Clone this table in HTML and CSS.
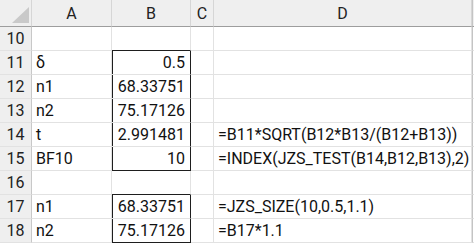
FILE: index.html
```html
<!DOCTYPE html>
<html lang="en">
<head>
    <meta charset="UTF-8">
    <title>JZS sample size</title>
    <link rel="stylesheet" href="styles.css">
</head>
<body>
    <table class="sheet">
        <colgroup>
            <col class="c-head">
            <col class="c-a">
            <col class="c-b">
            <col class="c-c">
            <col class="c-d">
            <col class="c-e">
        </colgroup>
        <thead>
            <tr>
                <th class="corner">
                    <svg width="32" height="26" viewBox="0 0 32 26"><polygon points="29,7 29,23 12,23" fill="#c9c9c9"/></svg>
                </th>
                <th>A</th>
                <th>B</th>
                <th>C</th>
                <th>D</th>
                <th class="edge"></th>
            </tr>
        </thead>
        <tbody>
            <tr>
                <th>10</th>
                <td></td>
                <td class="box-top"></td>
                <td></td>
                <td></td>
                <td class="edge"></td>
            </tr>
            <tr>
                <th>11</th>
                <td>&delta;</td>
                <td class="num box-side">0.5</td>
                <td></td>
                <td></td>
                <td class="edge"></td>
            </tr>
            <tr>
                <th>12</th>
                <td>n1</td>
                <td class="num box-side">68.33751</td>
                <td></td>
                <td></td>
                <td class="edge"></td>
            </tr>
            <tr>
                <th>13</th>
                <td>n2</td>
                <td class="num box-side">75.17126</td>
                <td></td>
                <td></td>
                <td class="edge"></td>
            </tr>
            <tr>
                <th>14</th>
                <td>t</td>
                <td class="num box-side">2.991481</td>
                <td></td>
                <td>=B11*SQRT(B12*B13/(B12+B13))</td>
                <td class="edge"></td>
            </tr>
            <tr>
                <th>15</th>
                <td>BF10</td>
                <td class="num box-side box-bottom">10</td>
                <td></td>
                <td>=INDEX(JZS_TEST(B14,B12,B13),2)</td>
                <td class="edge"></td>
            </tr>
            <tr>
                <th>16</th>
                <td></td>
                <td class="box-top"></td>
                <td></td>
                <td></td>
                <td class="edge"></td>
            </tr>
            <tr>
                <th>17</th>
                <td>n1</td>
                <td class="num box-side">68.33751</td>
                <td></td>
                <td>=JZS_SIZE(10,0.5,1.1)</td>
                <td class="edge"></td>
            </tr>
            <tr>
                <th>18</th>
                <td>n2</td>
                <td class="num box-side box-bottom">75.17126</td>
                <td></td>
                <td>=B17*1.1</td>
                <td class="edge"></td>
            </tr>
        </tbody>
    </table>
</body>
</html>
```

FILE: styles.css
```css
body {
    margin: 0;
    background-color: #ffffff;
    font-family: Roboto, "Liberation Sans", Arial, sans-serif;
    font-size: 16px;
    color: #111;
}
.sheet {
    width: 474px;
    table-layout: fixed;
    border-collapse: separate;
    border-spacing: 0;
}
.c-head { width: 32px; }
.c-a { width: 80px; }
.c-b { width: 79px; }
.c-c { width: 23px; }
.c-d { width: 258px; }
.c-e { width: 2px; }

th, td {
    padding: 1px 4px 0;
    height: 22px;
    line-height: 22px;
    white-space: nowrap;
    overflow: visible;
    border-right: 1px solid #e2e2e2;
    border-bottom: 1px solid #e2e2e2;
}
thead th {
    height: 23px;
    padding-top: 2px;
    line-height: 24px;
    background-color: #efefef;
    font-weight: normal;
    color: #222;
    text-align: center;
    border-right: 1px solid #d6d6d6;
    border-bottom: 1px solid #9d9d9d;
}
thead .corner {
    padding: 0;
    height: 25px;
    line-height: 0;
    vertical-align: top;
}
tbody th {
    padding-left: 0;
    padding-right: 0;
    font-weight: normal;
    text-align: center;
    color: #222;
    background-color: #efefef;
    border-right: 1px solid #c8c8c8;
}
.edge {
    padding: 0;
    border-right: none;
    border-left: 1px solid #c4c4c4;
}
thead .edge {
    padding: 0;
    border-right: none;
    border-left: 1px solid #c4c4c4;
}
.num {
    text-align: right;
    padding-right: 5px;
}
/* dark outline around the input and result blocks in column B */
.box-side {
    border-right: 1px solid #1e1e1e;
    box-shadow: inset 1px 0 0 #1e1e1e;
}
.box-top {
    border-bottom: 1px solid #1e1e1e;
}
.box-bottom {
    border-bottom: 1px solid #1e1e1e;
}
```
